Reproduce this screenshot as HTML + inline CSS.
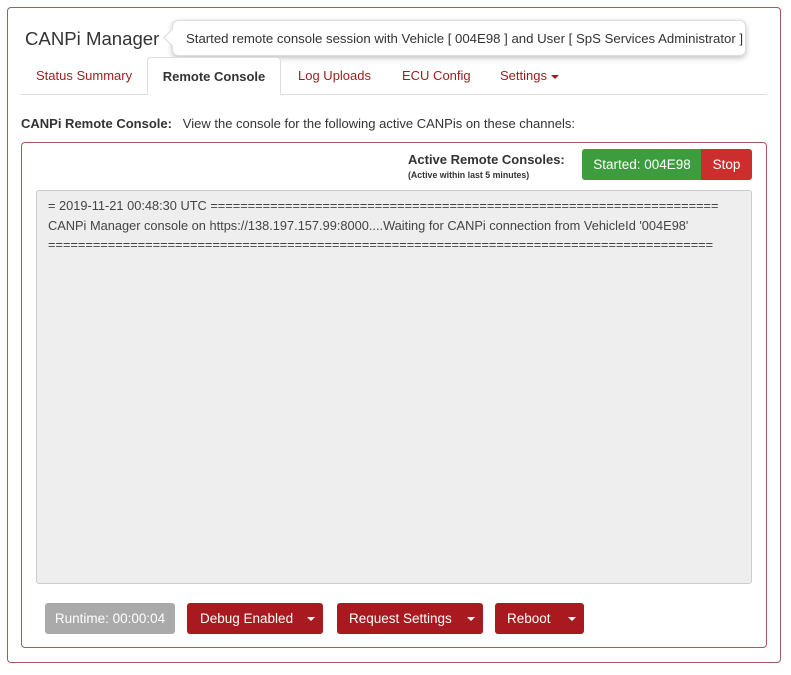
<!DOCTYPE html>
<html><head><style>
body{margin:0;width:791px;height:675px;background:#fff;font-family:"Liberation Sans",sans-serif;position:relative;overflow:hidden;color:#333}
.a{position:absolute}
.outer{left:7px;top:7px;width:772px;height:654px;border:1px solid #a05a5a;border-radius:4px}
.title{left:25px;top:28px;font-size:18.6px;color:#333}
.tip{left:172px;top:20px;width:574px;height:36px;background:#fff;border:1px solid #ddd;border-radius:6px;box-shadow:0 2px 6px rgba(0,0,0,.25);font-size:13.2px;line-height:36px;padding-left:13px;box-sizing:border-box;white-space:nowrap}
.arr{left:166px;top:31px;width:12px;height:12px;background:#fff;transform:rotate(45deg);border-left:1px solid #ddd;border-bottom:1px solid #ddd}
.tabline{left:21px;top:94px;width:746px;height:1px;background:#ddd}
.tab{top:58px;height:36px;line-height:36px;font-size:13px;color:#9b1c1c}
.act{left:147px;top:57px;width:134px;height:38px;border:1px solid #ddd;border-bottom:1px solid #fff;border-radius:4px 4px 0 0;background:#fff;text-align:center;line-height:37px;font-weight:bold;font-size:13px;color:#333;box-sizing:border-box}
.lbl{left:21px;top:116px;font-size:13px}
.inner{left:21px;top:142px;width:744px;height:504px;border:1px solid #a05a5a;border-radius:4px}
.btn{height:31px;line-height:31px;font-size:13.5px;color:#fff;text-align:center;box-sizing:border-box}
.con{left:36px;top:190px;width:716px;height:394px;background:#eee;border:1px solid #ccc;border-radius:3px;box-sizing:border-box;padding:5px 11px;font-size:12.8px;line-height:19.5px;white-space:nowrap;overflow:hidden;color:#444}
.red{background:#a81a1f;border-radius:3px}
.car{position:absolute;top:14px;width:0;height:0;border-left:4px solid transparent;border-right:4px solid transparent;border-top:4px solid #fff}
</style></head><body>
<div class="a outer"></div>
<div class="a title">CANPi Manager</div>
<div class="a tip">Started remote console session with Vehicle [ 004E98 ] and User [ SpS Services Administrator ]</div>
<div class="a arr"></div>
<div class="a tabline"></div>
<div class="a tab" style="left:36px">Status Summary</div>
<div class="a act">Remote Console</div>
<div class="a tab" style="left:298px">Log Uploads</div>
<div class="a tab" style="left:402px">ECU Config</div>
<div class="a tab" style="left:500px">Settings</div>
<div class="a car" style="left:551px;top:75px;border-top-color:#9b1c1c"></div>
<div class="a lbl"><b>CANPi Remote Console:</b>&nbsp;&nbsp; View the console for the following active CANPis on these channels:</div>
<div class="a inner"></div>
<div class="a" style="left:408px;top:152px;font-size:13px;font-weight:bold">Active Remote Consoles:</div>
<div class="a" style="left:408px;top:170px;font-size:8.8px;font-weight:bold">(Active within last 5 minutes)</div>
<div class="a btn" style="left:582px;top:149px;width:120px;background:#3d9c3d;border-radius:3px 0 0 3px">Started: 004E98</div>
<div class="a btn" style="left:701px;top:149px;width:51px;background:#cc2e2e;border-radius:0 3px 3px 0">Stop</div>
<div class="a con">= 2019-11-21 00:48:30 UTC ====================================================================<br>CANPi Manager console on https://138.197.157.99:8000....Waiting for CANPi connection from VehicleId '004E98'<br>=========================================================================================</div>
<div class="a btn" style="left:45px;top:603px;width:130px;background:#aaa;border-radius:3px">Runtime: 00:00:04</div>
<div class="a btn red" style="left:187px;top:603px;width:136px;text-align:left;padding-left:13px">Debug Enabled<span class="car" style="left:120px"></span></div>
<div class="a btn red" style="left:337px;top:603px;width:146px;text-align:left;padding-left:12px">Request Settings<span class="car" style="left:130px"></span></div>
<div class="a btn red" style="left:495px;top:603px;width:89px;text-align:left;padding-left:12px">Reboot<span class="car" style="left:73px"></span></div>
</body></html>
